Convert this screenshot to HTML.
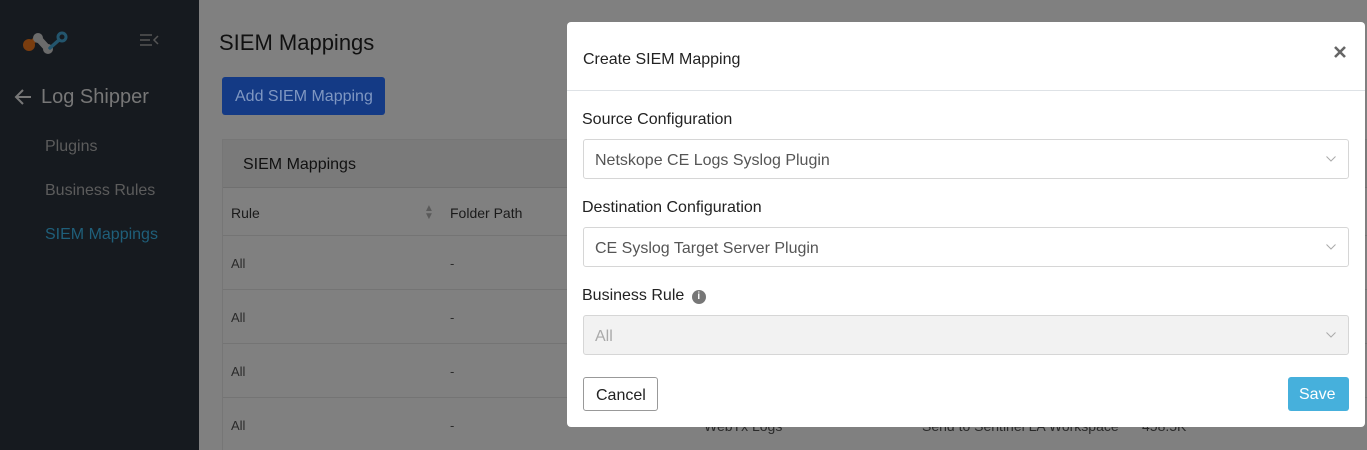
<!DOCTYPE html>
<html style="overflow:hidden;width:1367px;height:450px"><head><style>
*{box-sizing:border-box;margin:0;padding:0}
body{width:1367px;height:450px;overflow:hidden;position:relative;background:#808080;font-family:"Liberation Sans",sans-serif;}
.a{position:absolute;white-space:nowrap}
.sb{left:0;top:0;width:199px;height:450px;background:#161a1f}
.sel{position:absolute;left:16px;width:766px;height:40px;border:1px solid #d6d6d6;border-radius:3px;font-size:16px;color:#555;padding:12px 11px 0}
.sel svg{position:absolute;right:12px;top:16px}
.lbl{position:absolute;left:15px;font-size:16px;color:#222}
</style></head><body>
<div class="a sb"></div>
<svg class="a" style="left:20px;top:27px" width="50" height="28" viewBox="0 0 50 28">
<circle cx="9" cy="18" r="6" fill="#7a3d0f"/>
<path d="M9 18 L18 10" stroke="#7a3d0f" stroke-width="5" stroke-linecap="round"/>
<path d="M18 11 L28 22" stroke="#6b6b6b" stroke-width="7" stroke-linecap="round"/>
<circle cx="18" cy="11" r="5" fill="#6b6b6b"/><circle cx="28" cy="22" r="5" fill="#6b6b6b"/>
<path d="M30 21 L39 13" stroke="#23556d" stroke-width="3.5" stroke-linecap="round"/>
<circle cx="42" cy="10" r="4" fill="none" stroke="#23556d" stroke-width="3"/>
</svg>
<svg class="a" style="left:139px;top:33px" width="20" height="14" viewBox="0 0 20 14" stroke="#555" stroke-width="1.5" fill="none">
<path d="M1 2H13M1 7H11M1 12H13M19 3L15 7L19 11"/></svg>
<svg class="a" style="left:13px;top:88px" width="20" height="18" viewBox="0 0 20 18" stroke="#777" stroke-width="2" fill="none"><path d="M18 9H3M10 2L3 9L10 16"/></svg>
<div class="a" style="left:41px;top:86px;font-size:20px;color:#777">Log Shipper</div>
<div class="a" style="left:45px;top:138px;font-size:16px;color:#5c5c5c">Plugins</div>
<div class="a" style="left:45px;top:182px;font-size:16px;color:#5c5c5c">Business Rules</div>
<div class="a" style="left:45px;top:226px;font-size:16px;color:#1f5f7a">SIEM Mappings</div>

<div class="a" style="left:219px;top:30px;font-size:22px;color:#111">SIEM Mappings</div>
<div class="a" style="left:222px;top:77px;width:163px;height:38px;background:#143a85;border-radius:3px;color:#7f97c2;font-size:16px;padding:11px 13px 0">Add SIEM Mapping</div>
<div class="a" style="left:222px;top:139px;width:1200px;height:311px;border:1px solid #767676;border-bottom:none"></div>
<div class="a" style="left:223px;top:140px;width:1200px;height:48px;background:#7a7a7a;border-bottom:1px solid #707070"></div>
<div class="a" style="left:243px;top:156px;font-size:16px;color:#111">SIEM Mappings</div>
<div class="a" style="left:231px;top:205px;font-size:14px;color:#1a1a1a">Rule</div>
<div class="a" style="left:424px;top:205px;font-size:10px;color:#5a5a5a;line-height:8px">▲<br>▼</div>
<div class="a" style="left:450px;top:205px;font-size:14px;color:#1a1a1a">Folder Path</div>
<div class="a" style="left:223px;top:235px;width:1200px;border-top:1px solid #747474"></div>
<div class="a" style="left:223px;top:289px;width:1200px;border-top:1px solid #747474"></div>
<div class="a" style="left:223px;top:343px;width:1200px;border-top:1px solid #747474"></div>
<div class="a" style="left:223px;top:397px;width:1200px;border-top:1px solid #747474"></div>
<div class="a" style="left:231px;top:256px;font-size:13px;color:#2a2a2a">All</div>
<div class="a" style="left:231px;top:310px;font-size:13px;color:#2a2a2a">All</div>
<div class="a" style="left:231px;top:364px;font-size:13px;color:#2a2a2a">All</div>
<div class="a" style="left:231px;top:418px;font-size:13px;color:#2a2a2a">All</div>
<div class="a" style="left:450px;top:256px;font-size:13px;color:#2a2a2a">-</div>
<div class="a" style="left:450px;top:310px;font-size:13px;color:#2a2a2a">-</div>
<div class="a" style="left:450px;top:364px;font-size:13px;color:#2a2a2a">-</div>
<div class="a" style="left:450px;top:418px;font-size:13px;color:#2a2a2a">-</div>
<div class="a" style="left:704px;top:418px;font-size:14px;color:#2a2a2a">WebTx Logs</div>
<div class="a" style="left:922px;top:418px;font-size:14px;color:#2a2a2a">Send to Sentinel LA Workspace</div>
<div class="a" style="left:1142px;top:418px;font-size:14px;color:#2a2a2a">458.5K</div>

<div class="a" style="left:567px;top:22px;width:798px;height:405px;background:#fff;border-radius:4px">
 <div class="a" style="left:16px;top:29px;font-size:16px;color:#222">Create SIEM Mapping</div>
 <svg class="a" style="left:767px;top:24px" width="12" height="12" viewBox="0 0 12 12" stroke="#666" stroke-width="2.6"><path d="M1 1L11 11M11 1L1 11"/></svg>
 <div class="a" style="left:0;top:68px;width:798px;border-top:1px solid #dee2e6"></div>
 <div class="lbl" style="top:89px">Source Configuration</div>
 <div class="sel" style="top:117px">Netskope CE Logs Syslog Plugin<svg width="10" height="6" viewBox="0 0 10 6" fill="none" stroke="#aaa"><path d="M0.5 0.5L5 5L9.5 0.5"/></svg></div>
 <div class="lbl" style="top:177px">Destination Configuration</div>
 <div class="sel" style="top:205px">CE Syslog Target Server Plugin<svg width="10" height="6" viewBox="0 0 10 6" fill="none" stroke="#aaa"><path d="M0.5 0.5L5 5L9.5 0.5"/></svg></div>
 <div class="lbl" style="top:265px">Business Rule <span style="display:inline-block;width:14px;height:14px;border-radius:50%;background:#777;color:#fff;font-size:10px;font-weight:bold;text-align:center;line-height:14px;vertical-align:1px;margin-left:3px">i</span></div>
 <div class="sel" style="top:293px;background:#f2f2f2;color:#aaa">All<svg width="10" height="6" viewBox="0 0 10 6" fill="none" stroke="#aaa"><path d="M0.5 0.5L5 5L9.5 0.5"/></svg></div>
 <div class="a" style="left:16px;top:355px;width:75px;height:34px;border:1px solid #999;border-radius:3px;font-size:16px;color:#222;padding:9px 12px 0">Cancel</div>
 <div class="a" style="left:721px;top:355px;width:61px;height:34px;background:#46b0dc;border-radius:3px;font-size:16px;color:#fff;padding:9px 11px 0">Save</div>
</div>
</body></html>
